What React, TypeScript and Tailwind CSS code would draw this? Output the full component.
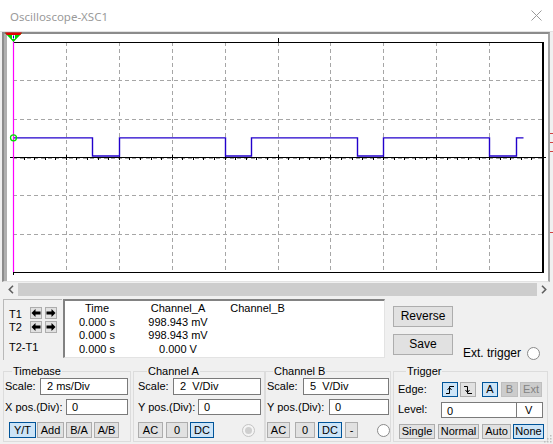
import React from 'react';
import clsx from 'clsx';

// plot geometry (svg coords, origin = top-left of white scope area)
const X0 = 6;
const X1 = 535;
const Y0 = 8;
const Y1 = 238;
const DX = (X1 - X0) / 10;
const DY = (Y1 - Y0) / 6;
const AXIS = Y0 + DY * 3;
const HIGH = AXIS - DY / 2;

const px = (v: number) => Math.round(v) + 0.5;

function ScopePlot() {
  const vlines = Array.from({ length: 9 }, (_, i) => px(X0 + DX * (i + 1)));
  const hlines = [1, 2, 4, 5].map((j) => px(Y0 + DY * j));
  const ticks = Array.from({ length: 51 }, (_, i) => px(X0 + (DX / 5) * i));

  // square wave on channel A: 4ms high / 1ms low
  const edges = [1.5, 2, 4, 4.5, 6.5, 7, 9, 9.5];
  let d = `M${X0} ${HIGH}`;
  let level = HIGH;
  edges.forEach((e) => {
    const x = px(X0 + DX * e);
    level = level === HIGH ? AXIS - 1 : HIGH;
    d += ` H${x} V${level}`;
  });
  d += ` H${px(X0 + DX * 9.5) + 7}`;

  return (
    <svg width={541} height={247} overflow="visible" className="block">
      {/* grid */}
      {vlines.map((x) => (
        <line key={'v' + x} x1={x} x2={x} y1={Y0} y2={Y1} stroke="#a6a6a6" strokeDasharray="4 3" shapeRendering="crispEdges" />
      ))}
      {hlines.map((y) => (
        <line key={'h' + y} x1={X0} x2={X1} y1={y} y2={y} stroke="#a6a6a6" strokeDasharray="4 3" shapeRendering="crispEdges" />
      ))}
      <line x1={X0} x2={X1} y1={px(AXIS) + 1} y2={px(AXIS) + 1} stroke="#a6a6a6" strokeDasharray="4 3" shapeRendering="crispEdges" />

      {/* frame */}
      <line x1={X0} x2={X1 + 1} y1={px(Y0)} y2={px(Y0)} stroke="#000" shapeRendering="crispEdges" />
      <line x1={X0} x2={X1 + 1} y1={px(Y1)} y2={px(Y1)} stroke="#000" strokeWidth={1.5} shapeRendering="crispEdges" />
      <line x1={X1 + 0.5} x2={X1 + 0.5} y1={Y0} y2={Y1 + 1} stroke="#000" strokeWidth={2} shapeRendering="crispEdges" />
      <line x1={px(X0)} x2={px(X0)} y1={Y1} y2={Y1 + 3} stroke="#000" shapeRendering="crispEdges" />
      <line x1={px(X0 + DX * 5)} x2={px(X0 + DX * 5)} y1={Y0 - 4} y2={Y0} stroke="#000" shapeRendering="crispEdges" />

      {/* centre axis with ticks */}
      <line x1={3} x2={X1 + 4} y1={px(AXIS)} y2={px(AXIS)} stroke="#000" shapeRendering="crispEdges" />
      {ticks.map((x, i) => (
        <line
          key={'t' + i}
          x1={x}
          x2={x}
          y1={i % 5 === 0 ? AXIS - 2 : AXIS}
          y2={AXIS + 3}
          stroke="#000"
          shapeRendering="crispEdges"
        />
      ))}

      {/* signal */}
      <path d={d} fill="none" stroke="#2200cc" strokeWidth={1.4} />

      {/* cursor 1 */}
      <line x1={px(X0)} x2={px(X0)} y1={6} y2={Y1} stroke="#ff00ff" strokeWidth={1.2} />
      <polygon points="-2,-1 15,-1 6.5,8" fill="#00d000" />
      <polygon points="-2,-1.5 15,-1.5 13.3,1 -0.3,1" fill="#e00000" />
      <rect x={5} y={1} width={3} height={4} fill="#fff" />
      <line x1={6.5} x2={6.5} y1={1.5} y2={4.5} stroke="#0000c0" strokeWidth={1} />

      {/* channel A level marker */}
      <circle cx={px(X0)} cy={HIGH} r={3} fill="none" stroke="#00dd00" strokeWidth={1.3} />
    </svg>
  );
}

type BtnProps = {
  children?: React.ReactNode;
  sel?: boolean;
  dis?: boolean;
  className?: string;
};

function Btn({ children, sel, dis, className }: BtnProps) {
  return (
    <div
      className={clsx(
        'flex items-center justify-center border',
        sel
          ? 'bg-[#cce4f7] border-[#005499]'
          : dis
          ? 'bg-[#cccccc] border-[#bfbfbf] text-[#838383]'
          : 'bg-[#e1e1e1] border-[#adadad]',
        className
      )}
    >
      {children}
    </div>
  );
}

function Field({ children, className }: { children: React.ReactNode; className?: string }) {
  return (
    <div className={clsx('flex items-center border border-[#7a7a7a] bg-white whitespace-pre', className)}>{children}</div>
  );
}

function Radio({ disabled }: { disabled?: boolean }) {
  if (disabled) {
    return (
      <div className="w-[13px] h-[13px] rounded-full border border-[#c4c4c4] bg-[#f4f4f4] flex items-center justify-center">
        <div className="w-[7px] h-[7px] rounded-full bg-[#cfcfcf]" />
      </div>
    );
  }
  return <div className="w-[13px] h-[13px] rounded-full border border-[#8a8a8a] bg-white" />;
}

function Arrow({ right }: { right?: boolean }) {
  return (
    <Btn className="w-[12px] h-[12px]">
      <svg width={10} height={10} viewBox="0 0 10 10" style={{ transform: right ? 'scaleX(-1)' : undefined }}>
        <path d="M0.5 5 L4.5 1 V3.5 H9.5 V6.5 H4.5 V9 Z" fill="#000" />
      </svg>
    </Btn>
  );
}

function EdgeIcon({ falling }: { falling?: boolean }) {
  return (
    <svg width={10} height={10} viewBox="0 0 10 10">
      {falling ? (
        <>
          <path d="M1 1.5 H4.5 V8.5 H9" fill="none" stroke="#000" strokeWidth={1} />
          <path d="M2.5 5 L4.5 7.5 L6.5 5" fill="none" stroke="#000" strokeWidth={1} />
        </>
      ) : (
        <>
          <path d="M1 8.5 H4.5 V1.5 H9" fill="none" stroke="#000" strokeWidth={1} />
          <path d="M2.5 5 L4.5 2.5 L6.5 5" fill="none" stroke="#000" strokeWidth={1} />
        </>
      )}
    </svg>
  );
}

export default function App() {
  return (
    <div className="relative w-[553px] h-[444px] overflow-hidden bg-[#f0f0f0] font-['Liberation_Sans',Arial,sans-serif] text-[11px] leading-[13px] text-black">
      {/* title bar */}
      <div className="h-[32px] bg-white border-b border-[#e3e3e3] flex items-center justify-between">
        <span className="pl-[10px] pt-[1px] font-['Noto_Sans',sans-serif] text-[11.5px] text-[#9a9a9a]">Oscilloscope-XSC1</span>
        <svg width={11} height={11} viewBox="0 0 11 11" className="mr-[11px]">
          <path d="M0.5 0.5 L10.5 10.5 M10.5 0.5 L0.5 10.5" stroke="#9a9a9a" strokeWidth={1} />
        </svg>
      </div>

      {/* scope screen */}
      <div className="ml-[2px] w-[548px] h-[250px] border-t-[2px] border-l-[2px] border-r-[2px] border-b border-t-[#8c8c8c] border-l-[#8c8c8c] border-r-[#a4a4a4] border-b-[#e3e3e3]">
        <div className="h-full border-l-[3px] border-[#b0b0b0] bg-white">
          <ScopePlot />
        </div>
      </div>
      {/* channel B markers peeking at the right edge */}
      <div className="absolute left-[550px] top-[133px] w-[3px] h-[1px] bg-[#d04040]" />
      <div className="absolute left-[550px] top-[142px] w-[3px] h-[1px] bg-[#d04040]" />
      <div className="absolute left-[550px] top-[151px] w-[3px] h-[1px] bg-[#d04040]" />
      <div className="absolute left-[550px] top-[232px] w-[3px] h-[1px] bg-[#d04040]" />

      {/* horizontal scrollbar */}
      <div className="flex h-[16px] pt-[1px]">
        <div className="ml-[3px] w-[15px] h-[13px] flex items-center justify-center">
          <svg width={6} height={9} viewBox="0 0 6 9">
            <path d="M5 0.8 L1.3 4.5 L5 8.2" fill="none" stroke="#606060" strokeWidth={1.6} />
          </svg>
        </div>
        <div className="w-[519px] h-[13px] bg-[#cdcdcd]" />
        <div className="w-[13px] h-[13px] flex items-center justify-center">
          <svg width={6} height={9} viewBox="0 0 6 9">
            <path d="M1 0.8 L4.7 4.5 L1 8.2" fill="none" stroke="#606060" strokeWidth={1.6} />
          </svg>
        </div>
      </div>

      {/* cursors / readout row */}
      <div className="flex h-[62px]">
        <div className="ml-[3px] mt-[1px] w-[59px] h-[61px] border-t border-l border-[#b9b9b9] pl-[5px] pt-[7px]">
          <div className="flex items-center h-[12px]">
            <span className="w-[21px] pt-[3px]">T1</span>
            <Arrow />
            <div className="ml-[3px]">
              <Arrow right />
            </div>
          </div>
          <div className="flex items-center h-[12px] mt-[2px]">
            <span className="w-[21px]">T2</span>
            <Arrow />
            <div className="ml-[3px]">
              <Arrow right />
            </div>
          </div>
          <div className="mt-[8px]">T2-T1</div>
        </div>

        <div className="ml-[1px] mt-[1px] w-[322px] h-[59px] border-t-[2px] border-l-[2px] border-t-[#828282] border-l-[#828282] border-r border-b border-r-[#e3e3e3] border-b-[#e3e3e3] bg-white pt-[1px] leading-[13.5px]">
          <div className="grid grid-cols-[64px_98px_61px] text-center">
            <span>Time</span>
            <span>Channel_A</span>
            <span>Channel_B</span>
            <span>0.000 s</span>
            <span>998.943 mV</span>
            <span />
            <span>0.000 s</span>
            <span>998.943 mV</span>
            <span />
            <span>0.000 s</span>
            <span>0.000 V</span>
            <span />
          </div>
        </div>

        <div className="ml-[8px] w-[60px] flex flex-col">
          <Btn className="mt-[8px] h-[21px] text-[12px]">Reverse</Btn>
          <Btn className="mt-[7px] h-[21px] text-[12px]">Save</Btn>
        </div>

        <div className="ml-[10px] mt-[49px] flex items-center h-[13px] text-[12px]">
          <span>Ext. trigger</span>
          <div className="ml-[6px]">
            <Radio />
          </div>
        </div>
      </div>

      {/* control groups */}
      <div className="flex items-start">
        <fieldset className="ml-[3px] mt-[5px] w-[128px] h-[77px] border border-[#dcdcdc] pl-[1px]">
          <legend className="ml-[7px] px-[1px]">Timebase</legend>
          <div className="flex items-center h-[17px]">
            <span className="w-[35px]">Scale:</span>
            <Field className="w-[88px] h-[17px] pl-[6px]">2 ms/Div</Field>
          </div>
          <div className="flex items-center h-[16px] mt-[4px]">
            <span className="w-[61px]">X pos.(Div):</span>
            <Field className="w-[62px] h-[16px] pl-[5px]">0</Field>
          </div>
          <div className="flex items-center h-[16px] mt-[7px] pl-[4px]">
            <Btn sel className="w-[27px] h-[16px]">Y/T</Btn>
            <Btn className="ml-[1px] w-[27px] h-[16px]">Add</Btn>
            <Btn className="ml-[2px] w-[26px] h-[16px]">B/A</Btn>
            <Btn className="ml-[2px] w-[25px] h-[16px]">A/B</Btn>
          </div>
        </fieldset>

        <fieldset className="ml-[2px] mt-[5px] w-[132px] h-[77px] border border-[#dcdcdc] pl-[4px]">
          <legend className="ml-[9px] px-[1px]">Channel A</legend>
          <div className="flex items-center h-[17px]">
            <span className="w-[35px]">Scale:</span>
            <Field className="w-[88px] h-[17px] pl-[6px]">2  V/Div</Field>
          </div>
          <div className="flex items-center h-[16px] mt-[4px]">
            <span className="w-[60px]">Y pos.(Div):</span>
            <Field className="w-[63px] h-[16px] pl-[5px]">0</Field>
          </div>
          <div className="flex items-center h-[16px] mt-[7px]">
            <Btn className="w-[25px] h-[16px]">AC</Btn>
            <Btn className="ml-[3px] w-[22px] h-[16px]">0</Btn>
            <Btn sel className="ml-[2px] w-[24px] h-[16px]">DC</Btn>
            <div className="ml-[28px]">
              <Radio disabled />
            </div>
          </div>
        </fieldset>

        <fieldset className="mt-[5px] w-[126px] h-[77px] border border-[#dcdcdc] pl-[1px]">
          <legend className="ml-[6px] px-[1px]">Channel B</legend>
          <div className="flex items-center h-[17px]">
            <span className="w-[36px]">Scale:</span>
            <Field className="w-[86px] h-[17px] pl-[6px]">5  V/Div</Field>
          </div>
          <div className="flex items-center h-[16px] mt-[4px]">
            <span className="w-[62px]">Y pos.(Div):</span>
            <Field className="w-[60px] h-[16px] pl-[5px]">0</Field>
          </div>
          <div className="flex items-center h-[16px] mt-[7px]">
            <Btn className="w-[23px] h-[16px]">AC</Btn>
            <Btn className="ml-[5px] w-[20px] h-[16px]">0</Btn>
            <Btn sel className="ml-[3px] w-[24px] h-[16px]">DC</Btn>
            <Btn className="ml-[3px] w-[13px] h-[16px]">-</Btn>
            <div className="ml-[19px]">
              <Radio />
            </div>
          </div>
        </fieldset>

        <fieldset className="ml-[2px] mt-[5px] w-[155px] h-[77px] border border-[#dcdcdc] pl-[4px]">
          <legend className="ml-[8px] px-[1px]">Trigger</legend>
          <div className="flex items-center h-[15px] mt-[4px]">
            <span className="w-[44px]">Edge:</span>
            <Btn sel className="w-[16px] h-[15px]">
              <EdgeIcon />
            </Btn>
            <Btn className="ml-[2px] w-[16px] h-[15px]">
              <EdgeIcon falling />
            </Btn>
            <Btn sel className="ml-[6px] w-[16px] h-[15px]">A</Btn>
            <Btn dis className="ml-[3px] w-[17px] h-[15px]">B</Btn>
            <Btn dis className="ml-[2px] w-[22px] h-[15px]">Ext</Btn>
          </div>
          <div className="flex items-center h-[16px] mt-[5px]">
            <span className="w-[43px] pb-[1px]">Level:</span>
            <Field className="w-[76px] h-[16px] pl-[5px] pt-[2px]">0</Field>
            <Field className="w-[26px] h-[16px] pl-[8px] border-l-0">V</Field>
          </div>
          <div className="flex items-center h-[15px] mt-[6px]">
            <Btn className="ml-[1px] w-[36px] h-[15px]">Single</Btn>
            <Btn className="ml-[3px] w-[41px] h-[15px]">Normal</Btn>
            <Btn className="ml-[3px] w-[29px] h-[15px]">Auto</Btn>
            <Btn sel className="ml-[2px] w-[31px] h-[15px]">None</Btn>
          </div>
        </fieldset>
      </div>

      {/* size grip */}
      <svg width={8} height={8} viewBox="0 0 8 8" className="absolute right-[1px] bottom-[1px]">
        <rect x={6} y={0} width={1.5} height={1.5} fill="#bdbdbd" />
        <rect x={3} y={3} width={1.5} height={1.5} fill="#bdbdbd" />
        <rect x={6} y={3} width={1.5} height={1.5} fill="#bdbdbd" />
        <rect x={0} y={6} width={1.5} height={1.5} fill="#bdbdbd" />
        <rect x={3} y={6} width={1.5} height={1.5} fill="#bdbdbd" />
        <rect x={6} y={6} width={1.5} height={1.5} fill="#bdbdbd" />
      </svg>
    </div>
  );
}
